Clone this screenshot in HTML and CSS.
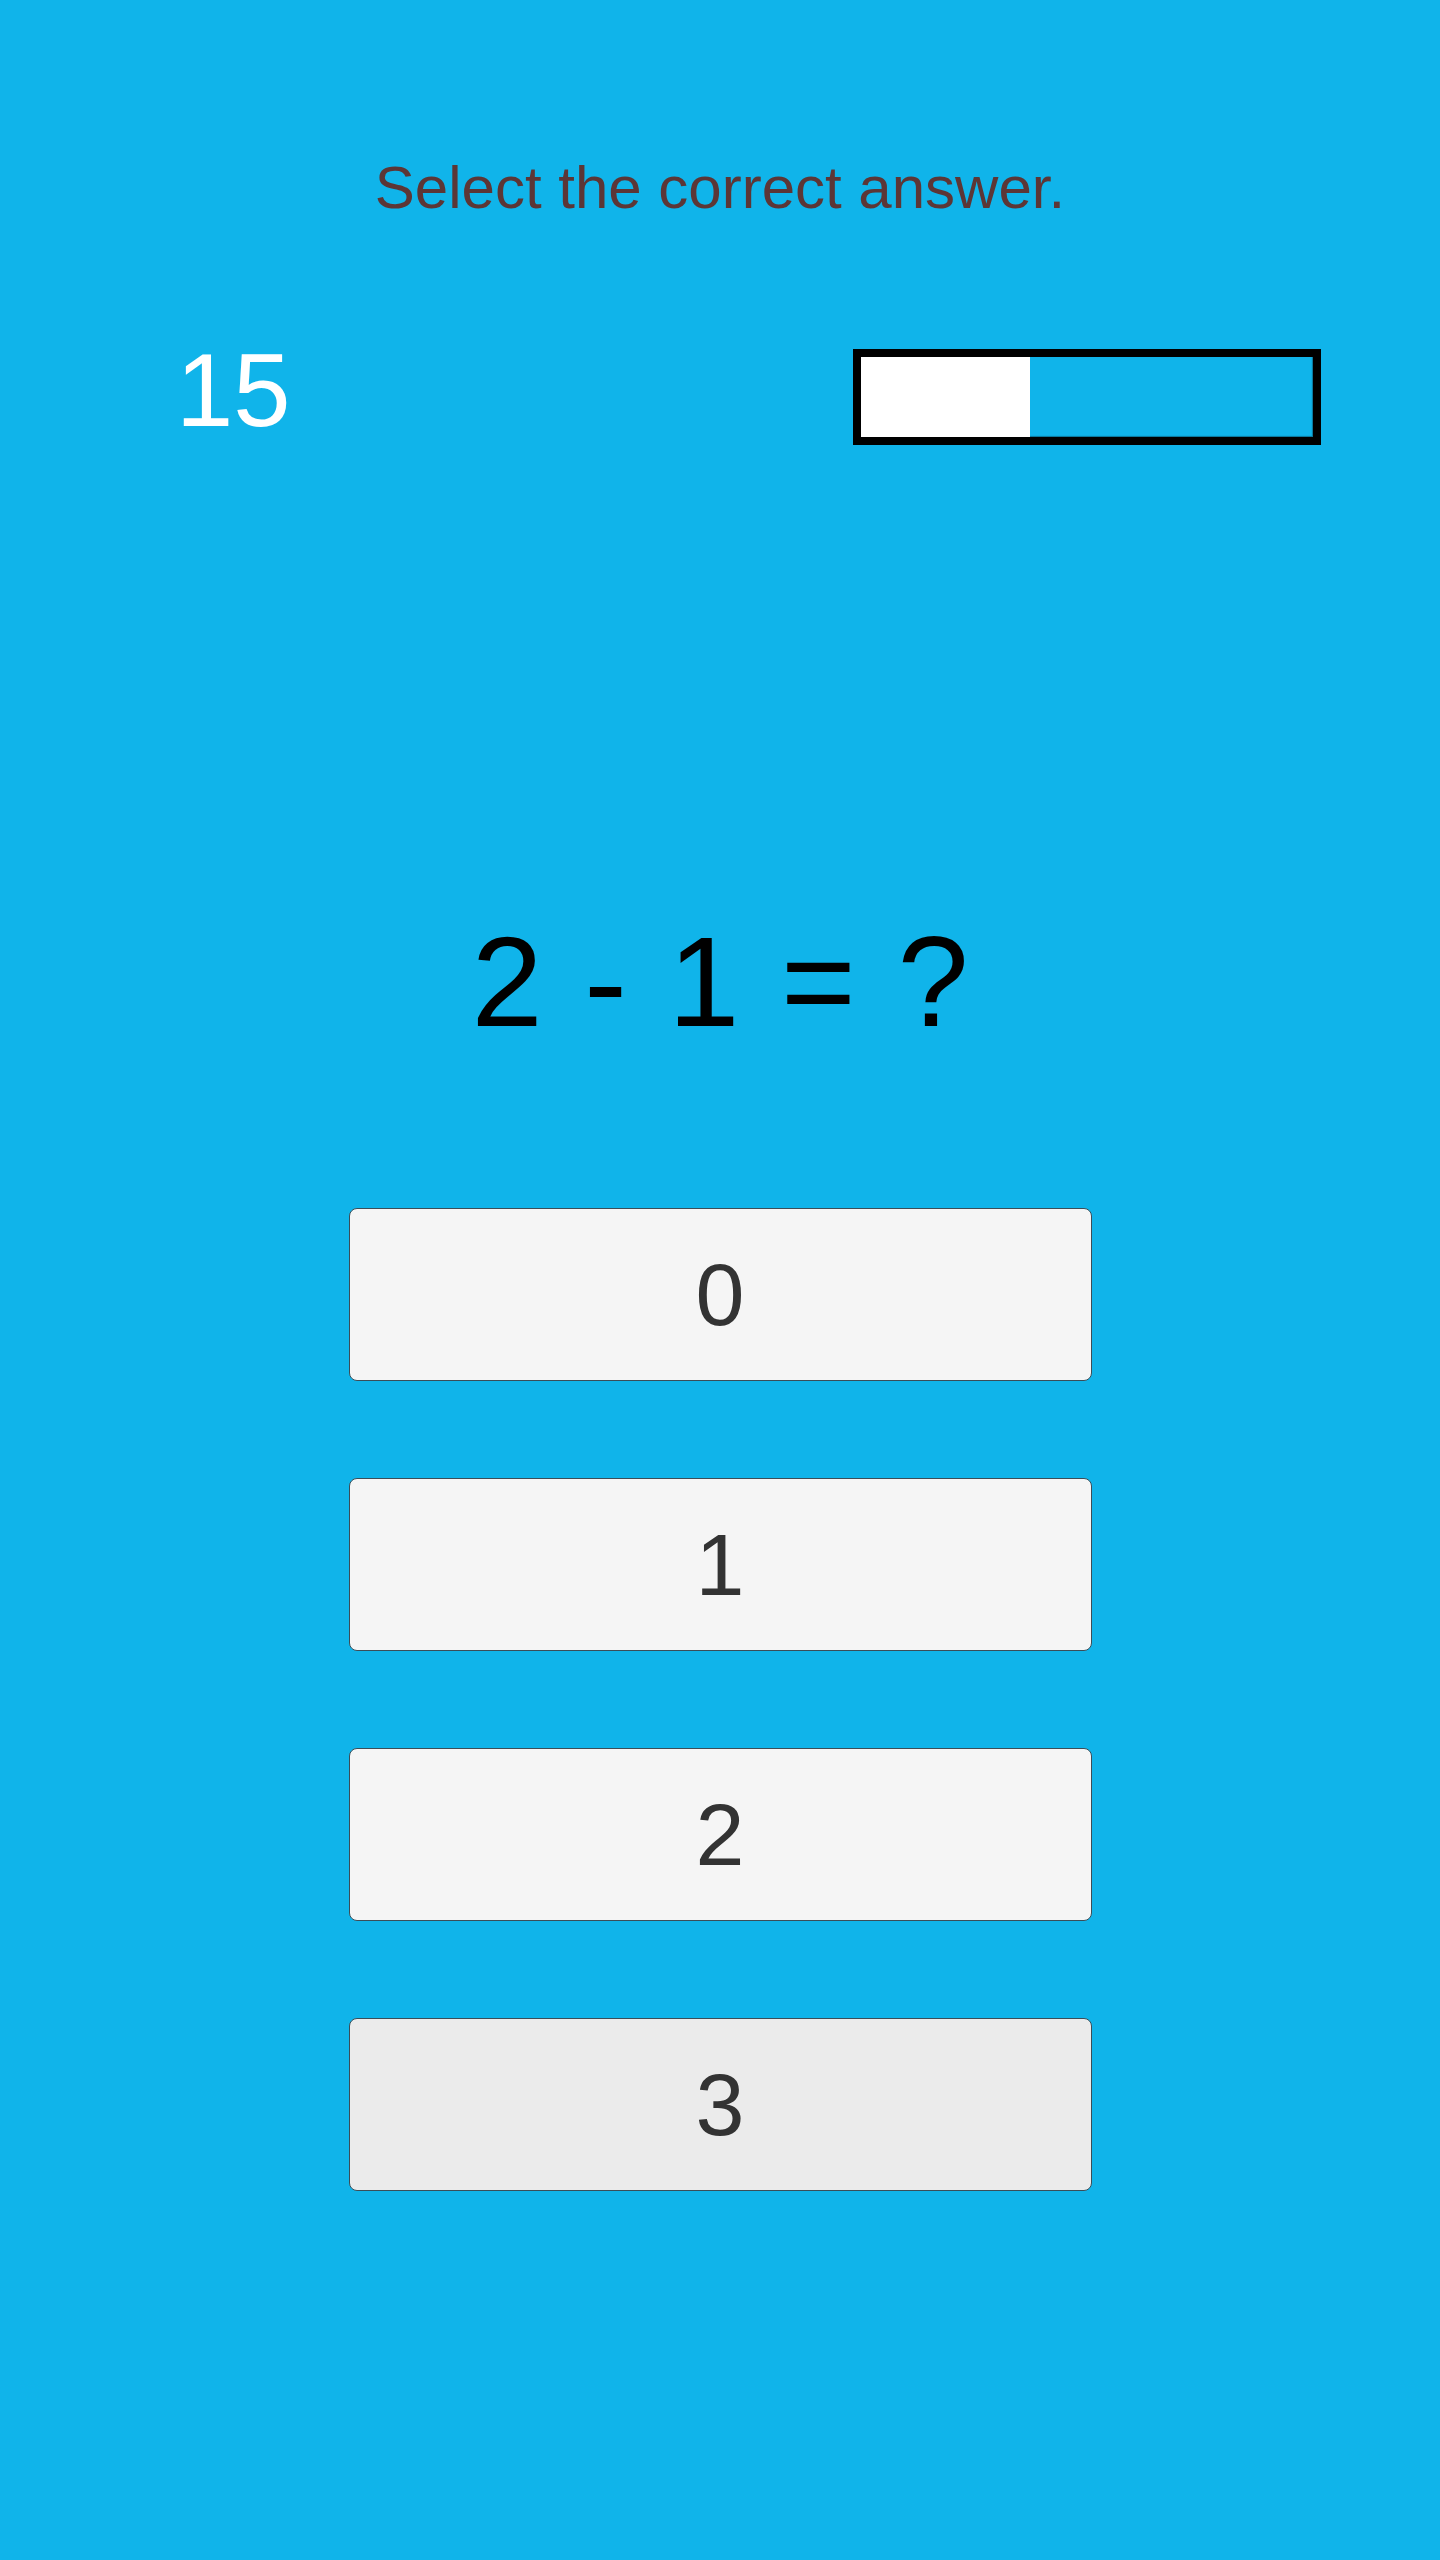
FILE: index.html
```html
<!DOCTYPE html>
<html lang="en">
<head>
<meta charset="utf-8">
<title>Quiz</title>
<link rel="stylesheet" href="styles.css">
</head>
<body>
<main class="quiz">
  <h1 class="prompt">Select the correct answer.</h1>
  <div class="status">
    <div class="timer">15</div>
    <div class="progress"><div class="progress-fill" style="width: 37.4%"></div></div>
  </div>
  <div class="question">2 - 1 = ?</div>
  <div class="answers">
    <button class="answer">0</button>
    <button class="answer">1</button>
    <button class="answer">2</button>
    <button class="answer answer-hover">3</button>
  </div>
</main>
</body>
</html>
```

FILE: styles.css
```css
html, body {
  margin: 0;
  padding: 0;
}
body {
  background: #10b4ea;
  font-family: "Liberation Sans", Arial, sans-serif;
  min-height: 2560px;
}
.quiz {
  display: flex;
  flex-direction: column;
}
.prompt {
  margin: 0;
  padding-top: 153px;
  font-size: 60px;
  font-weight: normal;
  line-height: 69px;
  color: #5c3636;
  text-align: center;
}
.status {
  display: flex;
  justify-content: space-between;
  align-items: flex-start;
  margin-top: 110px;
  padding-left: 176px;
  padding-right: 119px;
}
.timer {
  font-size: 103px;
  line-height: 118px;
  color: #ffffff;
}
.progress {
  margin-top: 17px;
  width: 452px;
  height: 80px;
  border: 8px solid #000000;
  box-shadow: inset -1px -1px 1px rgba(0, 0, 0, 0.35);
}
.progress-fill {
  height: 100%;
  background: #ffffff;
}
.question {
  margin-top: 458px;
  font-size: 128px;
  line-height: 147px;
  word-spacing: 6px;
  color: #000000;
  text-align: center;
}
.answers {
  display: flex;
  flex-direction: column;
  align-items: center;
  gap: 97px;
  margin-top: 153px;
}
.answer {
  box-sizing: border-box;
  width: 743px;
  height: 173px;
  display: flex;
  align-items: center;
  justify-content: center;
  padding: 0;
  background: #f5f5f5;
  border: 1.5px solid #3b4d58;
  border-radius: 8px;
  font-family: "Liberation Sans", Arial, sans-serif;
  font-size: 88px;
  color: #333333;
}
.answer-hover {
  background: #ebebeb;
}
```
